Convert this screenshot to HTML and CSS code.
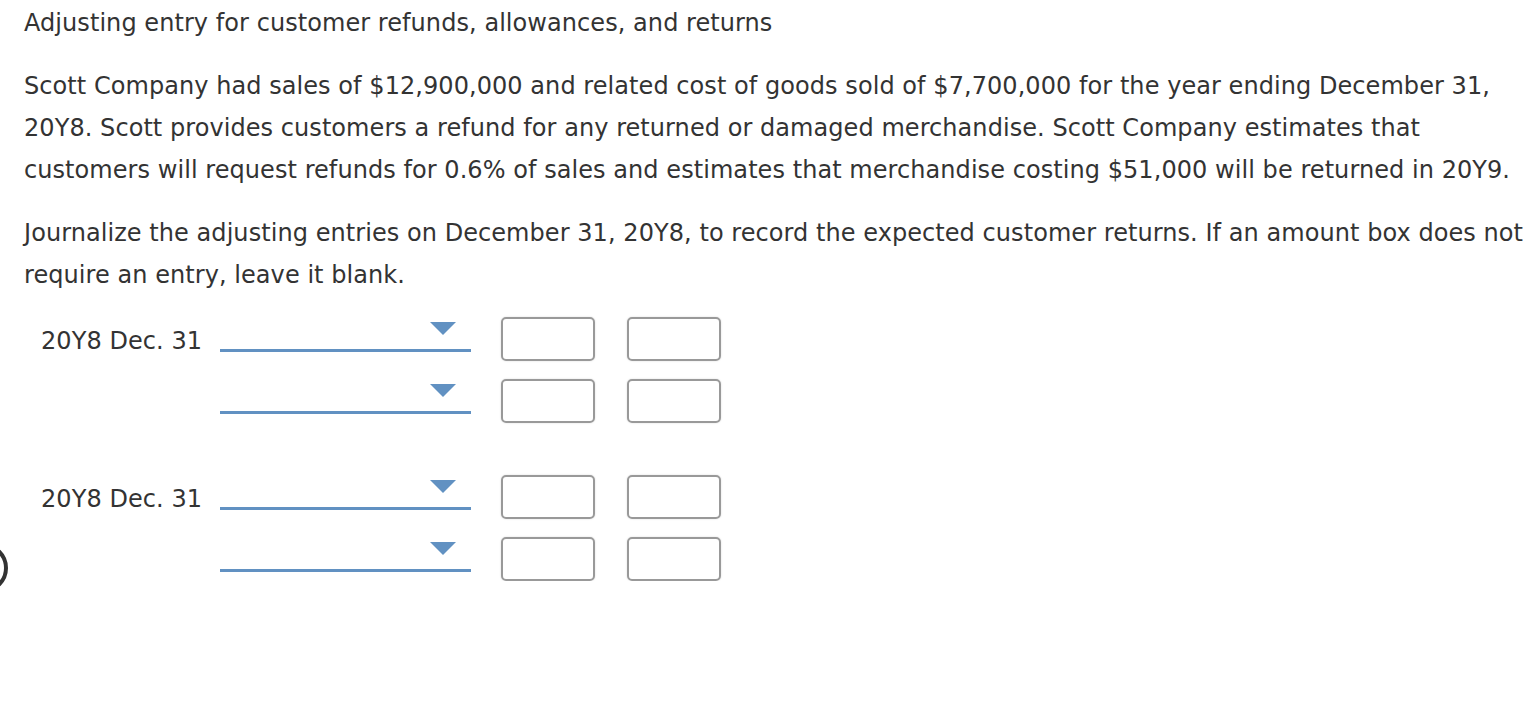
FILE: index.html
```html
<!DOCTYPE html>
<html>
<head>
<meta charset="utf-8">
<link rel="stylesheet" href="styles.css">
</head>
<body>
<div class="page">
  <p class="title">Adjusting entry for customer refunds, allowances, and returns</p>
  <p class="para">Scott Company had sales of $12,900,000 and related cost of goods sold of $7,700,000 for the year ending December 31,<br>20Y8. Scott provides customers a refund for any returned or damaged merchandise. Scott Company estimates that<br>customers will request refunds for 0.6% of sales and estimates that merchandise costing $51,000 will be returned in 20Y9.</p>
  <p class="para">Journalize the adjusting entries on December 31, 20Y8, to record the expected customer returns. If an amount box does not<br>require an entry, leave it blank.</p>

  <div class="entry">
    <div class="row">
      <div class="date">20Y8 Dec. 31</div>
      <div class="select"><span class="caret"></span></div>
      <div class="box"></div>
      <div class="box"></div>
    </div>
    <div class="row">
      <div class="date"></div>
      <div class="select"><span class="caret"></span></div>
      <div class="box"></div>
      <div class="box"></div>
    </div>
  </div>

  <div class="entry">
    <div class="row">
      <div class="date">20Y8 Dec. 31</div>
      <div class="select"><span class="caret"></span></div>
      <div class="box"></div>
      <div class="box"></div>
    </div>
    <div class="row">
      <div class="date"></div>
      <div class="select"><span class="caret"></span></div>
      <div class="box"></div>
      <div class="box"></div>
    </div>
  </div>
</div>
<div class="ring"></div>
</body>
</html>
```
FILE: styles.css
```css
html, body {
  margin: 0;
  padding: 0;
  background: #fff;
  overflow: hidden;
}
body {
  font-family: "DejaVu Sans", Verdana, sans-serif;
  color: #333;
  font-size: 24px;
  letter-spacing: 0.06px;
}
.page {
  padding: 2px 0 0 24px;
  white-space: nowrap;
}
.title {
  margin: 0 0 21px;
  line-height: 42px;
}
.para {
  margin: 0 0 21px;
  line-height: 42px;
}
.entry {
  display: flex;
  flex-direction: column;
  gap: 18px;
  margin-top: 21px;
}
.entry + .entry {
  margin-top: 52px;
}
.row {
  display: flex;
  align-items: flex-start;
  height: 44px;
}
.date {
  width: 179px;
  padding-left: 17px;
  padding-top: 2px;
  line-height: 44px;
}
.select {
  width: 251px;
  height: 32px;
  border-bottom: 3px solid #6191c2;
  position: relative;
  margin-right: 30px;
}
.caret {
  position: absolute;
  right: 15px;
  top: 5px;
  width: 0;
  height: 0;
  border-left: 13px solid transparent;
  border-right: 13px solid transparent;
  border-top: 13px solid #6191c2;
}
.box {
  width: 90px;
  height: 40px;
  border: 2px solid #999;
  border-radius: 5px;
  box-shadow: 0 0 2px rgba(0,0,0,0.15);
  margin-right: 32px;
  box-sizing: content-box;
}
.ring {
  position: absolute;
  left: -42px;
  top: 543px;
  width: 42px;
  height: 42px;
  border: 4px solid #333;
  border-radius: 50%;
}
```
